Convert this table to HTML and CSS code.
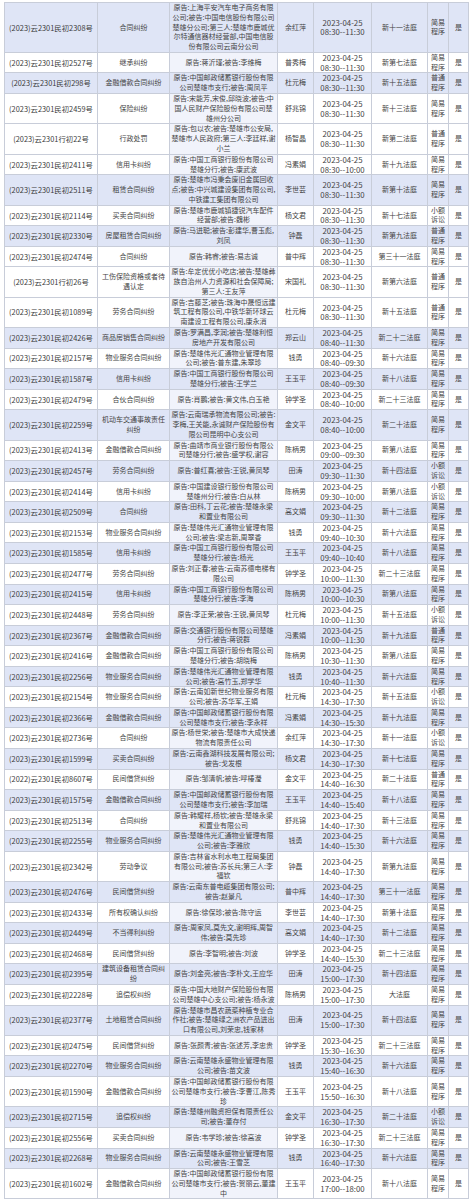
FILE: index.html
```html
<!DOCTYPE html>
<html lang="zh-CN">
<head>
<meta charset="utf-8">
<title>开庭公告</title>
<link rel="stylesheet" href="styles.css">
</head>
<body>
<table class="sched">
<colgroup><col class="c1"><col class="c2"><col class="c3"><col class="c4"><col class="c5"><col class="c6"><col class="c7"><col class="c8"></colgroup>
<tbody>
<tr class="b"><td class="no">(2023)云2301民初2308号</td><td>合同纠纷</td><td class="p">原告:上海平安汽车电子商务有限<br>公司;被告:中国电信股份有限公司<br>楚雄分公司;第三人:楚雄市鹿城优<br>尔特通信器材经营部,中国电信股<br>份有限公司云南分公司</td><td>余红萍</td><td class="d">2023-04-25<br>08:30--11:30</td><td>新十一法庭</td><td>简易<br>程序</td><td>是</td></tr>
<tr><td class="no">(2023)云2301民初2527号</td><td>继承纠纷</td><td class="p">原告:蒋沂瑾;被告:李维梅</td><td>普秀梅</td><td class="d">2023-04-25<br>08:30--11:30</td><td>新第七法庭</td><td>简易<br>程序</td><td>是</td></tr>
<tr class="b"><td class="no">(2023)云2301民初298号</td><td>金融借款合同纠纷</td><td class="p">原告:中国邮政储蓄银行股份有限<br>公司楚雄市支行;被告:周凤平</td><td>杜元梅</td><td class="d">2023-04-25<br>08:30--11:30</td><td>新十五法庭</td><td>普通<br>程序</td><td>是</td></tr>
<tr><td class="no">(2023)云2301民初2459号</td><td>保险纠纷</td><td class="p">原告:宋能芳,宋俊,邱晓波;被告:中<br>国人民财产保险股份有限公司楚<br>雄州分公司</td><td>舒兆锦</td><td class="d">2023-04-25<br>08:30--11:30</td><td>新十三法庭</td><td>简易<br>程序</td><td>是</td></tr>
<tr><td class="no">(2023)云2301行初22号</td><td>行政处罚</td><td class="p">原告:包以农;被告:楚雄市公安局,<br>楚雄市人民政府;第三人:李廷祥,谢<br>小兰</td><td>杨智晶</td><td class="d">2023-04-25<br>08:30--11:30</td><td>新第二法庭</td><td>普通<br>程序</td><td>是</td></tr>
<tr><td class="no">(2023)云2301民初2411号</td><td>信用卡纠纷</td><td class="p">原告:中国工商银行股份有限公司<br>楚雄分行;被告:康武波</td><td>冯素娟</td><td class="d">2023-04-25<br>08:30--10:00</td><td>新十九法庭</td><td>简易<br>程序</td><td>是</td></tr>
<tr class="b"><td class="no">(2023)云2301民初2511号</td><td>租赁合同纠纷</td><td class="p">原告:楚雄市冯秉会废旧金属回收<br>点;被告:中兴城建设集团有限公司,<br>中铁建工集团有限公司</td><td>李世芸</td><td class="d">2023-04-25<br>08:30--11:30</td><td>新第十法庭</td><td>简易<br>程序</td><td>是</td></tr>
<tr><td class="no">(2023)云2301民初2114号</td><td>买卖合同纠纷</td><td class="p">原告:楚雄市鹿城镇捷锐汽车配件<br>经营部;被告:魏彬</td><td>杨文君</td><td class="d">2023-04-25<br>08:30--11:30</td><td>新十七法庭</td><td>小额<br>诉讼</td><td>是</td></tr>
<tr class="b"><td class="no">(2023)云2301民初2330号</td><td>房屋租赁合同纠纷</td><td class="p">原告:马进聪;被告:彭建华,曹玉彪,<br>刘凤</td><td>钟磊</td><td class="d">2023-04-25<br>08:30--11:30</td><td>新第九法庭</td><td>普通<br>程序</td><td>是</td></tr>
<tr><td class="no">(2023)云2301民初2474号</td><td>合同纠纷</td><td class="p">原告:韩睿;被告:易志诚</td><td>普中辉</td><td class="d">2023-04-25<br>08:30--11:30</td><td>第三十一法庭</td><td>简易<br>程序</td><td>是</td></tr>
<tr><td class="no">(2023)云2301行初26号</td><td>工伤保险资格或者待<br>遇认定</td><td class="p">原告:牟定优优小吃店;被告:楚雄彝<br>族自治州人力资源和社会保障局;<br>第三人:王友萍</td><td>宋国礼</td><td class="d">2023-04-25<br>08:30--11:30</td><td>新第六法庭</td><td>普通<br>程序</td><td>是</td></tr>
<tr><td class="no">(2023)云2301民初1089号</td><td>劳务合同纠纷</td><td class="p">原告:吉藤芝;被告:珠海中晟恒远建<br>筑工程有限公司,中铁华新环球云<br>南建设工程有限公司,康永消</td><td>杜元梅</td><td class="d">2023-04-25<br>08:30--11:30</td><td>新十五法庭</td><td>普通<br>程序</td><td>是</td></tr>
<tr class="b"><td class="no">(2023)云2301民初2426号</td><td>商品房销售合同纠纷</td><td class="p">原告:罗满昌,李润;被告:楚雄利恒<br>房地产开发有限公司</td><td>郑云山</td><td class="d">2023-04-25<br>08:40--11:30</td><td>新二十二法庭</td><td>简易<br>程序</td><td>是</td></tr>
<tr><td class="no">(2023)云2301民初2157号</td><td>物业服务合同纠纷</td><td class="p">原告:楚雄伟光汇通物业管理有限<br>公司;被告:普东建,朱翠珍</td><td>钱勇</td><td class="d">2023-04-25<br>08:40--09:30</td><td>新十六法庭</td><td>简易<br>程序</td><td>是</td></tr>
<tr class="b"><td class="no">(2023)云2301民初1587号</td><td>信用卡纠纷</td><td class="p">原告:中国工商银行股份有限公司<br>楚雄分行;被告:王学兰</td><td>王玉平</td><td class="d">2023-04-25<br>08:40--09:30</td><td>新十八法庭</td><td>简易<br>程序</td><td>是</td></tr>
<tr><td class="no">(2023)云2301民初2479号</td><td>合伙合同纠纷</td><td class="p">原告:肖鹏;被告:黄文伟,白玉艳</td><td>钟学圣</td><td class="d">2023-04-25<br>08:40--10:00</td><td>新二十三法庭</td><td>简易<br>程序</td><td>是</td></tr>
<tr class="b"><td class="no">(2023)云2301民初2259号</td><td>机动车交通事故责任<br>纠纷</td><td class="p">原告:云南瑞承物流有限公司;被告:<br>李梅,王关能,永诚财产保险股份有<br>限公司昆明中心支公司</td><td>金文平</td><td class="d">2023-04-25<br>08:40--10:00</td><td>新二十法庭</td><td>简易<br>程序</td><td>是</td></tr>
<tr><td class="no">(2023)云2301民初2413号</td><td>金融借款合同纠纷</td><td class="p">原告:曲靖市商业银行股份有限公<br>司楚雄分行;被告:盛学权,谢容</td><td>陈柄男</td><td class="d">2023-04-25<br>09:00--09:30</td><td>新第八法庭</td><td>简易<br>程序</td><td>是</td></tr>
<tr class="b"><td class="no">(2023)云2301民初2457号</td><td>劳务合同纠纷</td><td class="p">原告:普红喜;被告:王锐,黄凤琴</td><td>田涛</td><td class="d">2023-04-25<br>09:30--11:30</td><td>新十四法庭</td><td>小额<br>诉讼</td><td>是</td></tr>
<tr><td class="no">(2023)云2301民初2414号</td><td>信用卡纠纷</td><td class="p">原告:中国建设银行股份有限公司<br>楚雄州分行;被告:白从林</td><td>陈柄男</td><td class="d">2023-04-25<br>09:30--10:00</td><td>新第八法庭</td><td>小额<br>诉讼</td><td>是</td></tr>
<tr class="b"><td class="no">(2023)云2301民初2509号</td><td>合同纠纷</td><td class="p">原告:田科,丁云花;被告:楚雄永梁<br>和置业有限公司</td><td>高文娟</td><td class="d">2023-04-25<br>09:30--11:30</td><td>新十二法庭</td><td>简易<br>程序</td><td>是</td></tr>
<tr><td class="no">(2023)云2301民初2153号</td><td>物业服务合同纠纷</td><td class="p">原告:楚雄伟光汇通物业管理有限<br>公司;被告:梁志新,周翠香</td><td>钱勇</td><td class="d">2023-04-25<br>09:40--10:30</td><td>新十六法庭</td><td>简易<br>程序</td><td>是</td></tr>
<tr class="b"><td class="no">(2023)云2301民初1585号</td><td>信用卡纠纷</td><td class="p">原告:中国工商银行股份有限公司<br>楚雄分行;被告:杨光</td><td>王玉平</td><td class="d">2023-04-25<br>09:40--10:40</td><td>新十八法庭</td><td>简易<br>程序</td><td>是</td></tr>
<tr><td class="no">(2023)云2301民初2477号</td><td>劳务合同纠纷</td><td class="p">原告:刘正春;被告:云南苏德电梯有<br>限公司</td><td>钟学圣</td><td class="d">2023-04-25<br>10:00--11:30</td><td>新二十三法庭</td><td>简易<br>程序</td><td>是</td></tr>
<tr class="b"><td class="no">(2023)云2301民初2415号</td><td>信用卡纠纷</td><td class="p">原告:中国工商银行股份有限公司<br>楚雄分行;被告:李海</td><td>陈柄男</td><td class="d">2023-04-25<br>10:00--10:30</td><td>新第八法庭</td><td>简易<br>程序</td><td>是</td></tr>
<tr><td class="no">(2023)云2301民初2448号</td><td>劳务合同纠纷</td><td class="p">原告:李正荣;被告:王锐,黄凤琴</td><td>杜元梅</td><td class="d">2023-04-25<br>10:00--11:30</td><td>新十五法庭</td><td>小额<br>诉讼</td><td>是</td></tr>
<tr class="b"><td class="no">(2023)云2301民初2367号</td><td>金融借款合同纠纷</td><td class="p">原告:交通银行股份有限公司楚雄<br>分行;被告:蒋锐群</td><td>冯素娟</td><td class="d">2023-04-25<br>10:00--11:30</td><td>新十九法庭</td><td>普通<br>程序</td><td>是</td></tr>
<tr><td class="no">(2023)云2301民初2416号</td><td>金融借款合同纠纷</td><td class="p">原告:中国工商银行股份有限公司<br>楚雄分行;被告:胡晓梅</td><td>陈柄男</td><td class="d">2023-04-25<br>10:30--11:30</td><td>新第八法庭</td><td>简易<br>程序</td><td>是</td></tr>
<tr class="b"><td class="no">(2023)云2301民初2256号</td><td>物业服务合同纠纷</td><td class="p">原告:楚雄伟光汇通物业管理有限<br>公司;被告:高竹玉,郑学华</td><td>钱勇</td><td class="d">2023-04-25<br>10:40--11:30</td><td>新十六法庭</td><td>简易<br>程序</td><td>是</td></tr>
<tr><td class="no">(2023)云2301民初2154号</td><td>物业服务合同纠纷</td><td class="p">原告:云南如新世纪物业服务有限<br>公司;被告:苏华军,王娟</td><td>杜元梅</td><td class="d">2023-04-25<br>14:30--17:30</td><td>新十五法庭</td><td>小额<br>诉讼</td><td>是</td></tr>
<tr class="b"><td class="no">(2023)云2301民初2366号</td><td>金融借款合同纠纷</td><td class="p">原告:中国邮政储蓄银行股份有限<br>公司楚雄市支行;被告:李永祥</td><td>冯素娟</td><td class="d">2023-04-25<br>14:30--15:30</td><td>新十九法庭</td><td>简易<br>程序</td><td>是</td></tr>
<tr><td class="no">(2023)云2301民初2736号</td><td>合同纠纷</td><td class="p">原告:杨世栄;被告:楚雄市大成快递<br>物流有限责任公司</td><td>余红萍</td><td class="d">2023-04-25<br>14:30--17:30</td><td>新十一法庭</td><td>小额<br>诉讼</td><td>是</td></tr>
<tr class="b"><td class="no">(2023)云2301民初1599号</td><td>买卖合同纠纷</td><td class="p">原告:云南鑫湖科技发展有限公司;<br>被告:戈发根</td><td>杨文君</td><td class="d">2023-04-25<br>14:30--17:30</td><td>新十七法庭</td><td>简易<br>程序</td><td>是</td></tr>
<tr><td class="no">(2022)云2301民初8607号</td><td>民间借贷纠纷</td><td class="p">原告:邹清帆;被告:呼椿瀅</td><td>金文平</td><td class="d">2023-04-25<br>14:40--16:30</td><td>新二十法庭</td><td>普通<br>程序</td><td>是</td></tr>
<tr class="b"><td class="no">(2023)云2301民初1575号</td><td>金融借款合同纠纷</td><td class="p">原告:中国邮政储蓄银行股份有限<br>公司楚雄市支行;被告:李加瑞</td><td>王玉平</td><td class="d">2023-04-25<br>14:40--15:40</td><td>新十八法庭</td><td>简易<br>程序</td><td>是</td></tr>
<tr><td class="no">(2023)云2301民初2513号</td><td>合同纠纷</td><td class="p">原告:韩耀祥,杨钦;被告:楚雄永梁<br>和置业有限公司</td><td>舒兆锦</td><td class="d">2023-04-25<br>14:40--17:30</td><td>新十三法庭</td><td>简易<br>程序</td><td>是</td></tr>
<tr class="b"><td class="no">(2023)云2301民初2255号</td><td>物业服务合同纠纷</td><td class="p">原告:楚雄伟光汇通物业管理有限<br>公司;被告:李雅欣</td><td>钱勇</td><td class="d">2023-04-25<br>14:40--15:30</td><td>新十六法庭</td><td>简易<br>程序</td><td>是</td></tr>
<tr><td class="no">(2023)云2301民初2342号</td><td>劳动争议</td><td class="p">原告:吉林省水利水电工程局集团<br>有限公司;被告:苏长兵;第三人:李<br>福钦</td><td>钟磊</td><td class="d">2023-04-25<br>14:40--17:30</td><td>新第九法庭</td><td>简易<br>程序</td><td>是</td></tr>
<tr class="b"><td class="no">(2023)云2301民初2476号</td><td>民间借贷纠纷</td><td class="p">原告:云南东普电缆集团有限公司;<br>被告:赵景凡</td><td>普中辉</td><td class="d">2023-04-25<br>14:40--17:30</td><td>第三十一法庭</td><td>简易<br>程序</td><td>是</td></tr>
<tr><td class="no">(2023)云2301民初2433号</td><td>所有权确认纠纷</td><td class="p">原告:徐保珍;被告:陈守运</td><td>李世芸</td><td class="d">2023-04-25<br>14:40--17:30</td><td>新第十法庭</td><td>简易<br>程序</td><td>是</td></tr>
<tr class="b"><td class="no">(2023)云2301民初2449号</td><td>不当得利纠纷</td><td class="p">原告:周家凤,莫先文,谢明辉,周智<br>伟;被告:莫先珍</td><td>高文娟</td><td class="d">2023-04-25<br>14:40--17:30</td><td>新十二法庭</td><td>简易<br>程序</td><td>是</td></tr>
<tr><td class="no">(2023)云2301民初2468号</td><td>民间借贷纠纷</td><td class="p">原告:李智明;被告:刘波</td><td>钟学圣</td><td class="d">2023-04-25<br>14:40--15:30</td><td>新二十三法庭</td><td>简易<br>程序</td><td>是</td></tr>
<tr class="b"><td class="no">(2023)云2301民初2395号</td><td>建筑设备租赁合同纠<br>纷</td><td class="p">原告:刘金亮;被告:李朴文,王应华</td><td>田涛</td><td class="d">2023-04-25<br>15:00--17:30</td><td>新十四法庭</td><td>简易<br>程序</td><td>是</td></tr>
<tr><td class="no">(2023)云2301民初2228号</td><td>追偿权纠纷</td><td class="p">原告:中国大地财产保险股份有限<br>公司楚雄中心支公司;被告:杨永波</td><td>陈柄男</td><td class="d">2023-04-25<br>15:00--17:30</td><td>大法庭</td><td>简易<br>程序</td><td>是</td></tr>
<tr class="b"><td class="no">(2023)云2301民初2377号</td><td>土地租赁合同纠纷</td><td class="p">原告:楚雄市昌农蔬菜种植专业合<br>作社;被告:楚雄绿之洲农产品进出<br>口有限公司,刘荣忠,钱家林</td><td>田涛</td><td class="d">2023-04-25<br>15:00--17:30</td><td>新十四法庭</td><td>简易<br>程序</td><td>是</td></tr>
<tr><td class="no">(2023)云2301民初2475号</td><td>民间借贷纠纷</td><td class="p">原告:张颜青;被告:张述芳,李忠贵</td><td>钟学圣</td><td class="d">2023-04-25<br>15:30--16:30</td><td>新二十三法庭</td><td>简易<br>程序</td><td>是</td></tr>
<tr class="b"><td class="no">(2023)云2301民初2270号</td><td>物业服务合同纠纷</td><td class="p">原告:云南楚雄永盛物业管理有限<br>公司;被告:苗文波</td><td>钱勇</td><td class="d">2023-04-25<br>15:40--16:30</td><td>新十六法庭</td><td>简易<br>程序</td><td>是</td></tr>
<tr><td class="no">(2023)云2301民初1590号</td><td>金融借款合同纠纷</td><td class="p">原告:中国邮政储蓄银行股份有限<br>公司楚雄市支行;被告:李曹江,陈秀<br>珍</td><td>王玉平</td><td class="d">2023-04-25<br>15:50--16:30</td><td>新十八法庭</td><td>简易<br>程序</td><td>是</td></tr>
<tr class="b"><td class="no">(2023)云2301民初2715号</td><td>追偿权纠纷</td><td class="p">原告:楚雄州融资担保有限责任公<br>司;被告:董存付</td><td>金文平</td><td class="d">2023-04-25<br>16:30--17:30</td><td>新二十法庭</td><td>小额<br>诉讼</td><td>是</td></tr>
<tr><td class="no">(2023)云2301民初2556号</td><td>买卖合同纠纷</td><td class="p">原告:韦学珍;被告:徐高波</td><td>钟学圣</td><td class="d">2023-04-25<br>16:30--17:30</td><td>新二十三法庭</td><td>简易<br>程序</td><td>是</td></tr>
<tr class="b"><td class="no">(2023)云2301民初2268号</td><td>物业服务合同纠纷</td><td class="p">原告:云南楚雄永盛物业管理有限<br>公司;被告:王雪芝</td><td>钱勇</td><td class="d">2023-04-25<br>16:40--17:30</td><td>新十六法庭</td><td>简易<br>程序</td><td>是</td></tr>
<tr><td class="no">(2023)云2301民初1602号</td><td>金融借款合同纠纷</td><td class="p">原告:中国邮政储蓄银行股份有限<br>公司楚雄市支行;被告:贺丽云,董建<br>中</td><td>王玉平</td><td class="d">2023-04-25<br>17:00--18:00</td><td>新十八法庭</td><td>简易<br>程序</td><td>是</td></tr>
</tbody>
</table>
</body>
</html>
```

FILE: styles.css
```css
html, body {
  margin: 0;
  background: #ffffff;
}

body {
  padding: 2px 0 0 4px;
  font-family: "Noto Sans CJK SC", "Noto Sans", sans-serif;
}

.sched {
  border-collapse: collapse;
  table-layout: fixed;
  width: 464px;
}

.c1 { width: 93px; }
.c2 { width: 72px; }
.c3 { width: 108px; }
.c4 { width: 36px; }
.c5 { width: 58px; }
.c6 { width: 56px; }
.c7 { width: 21px; }
.c8 { width: 20px; }

.sched td {
  border: 1px solid #c8cdd9;
  padding: 0;
  text-align: center;
  vertical-align: middle;
  font-size: 7px;
  line-height: 9.78px;
  color: #444444;
  white-space: nowrap;
  overflow: hidden;
  background: #ffffff;
}

.sched td.p {
  background: #f1f3fb;
}

.sched tr.b td {
  background: #dfe5f6;
}

.sched td.no {
  font-size: 7.4px;
  color: #3c3c3c;
}

.sched td.d {
  font-size: 7.8px;
}
```
